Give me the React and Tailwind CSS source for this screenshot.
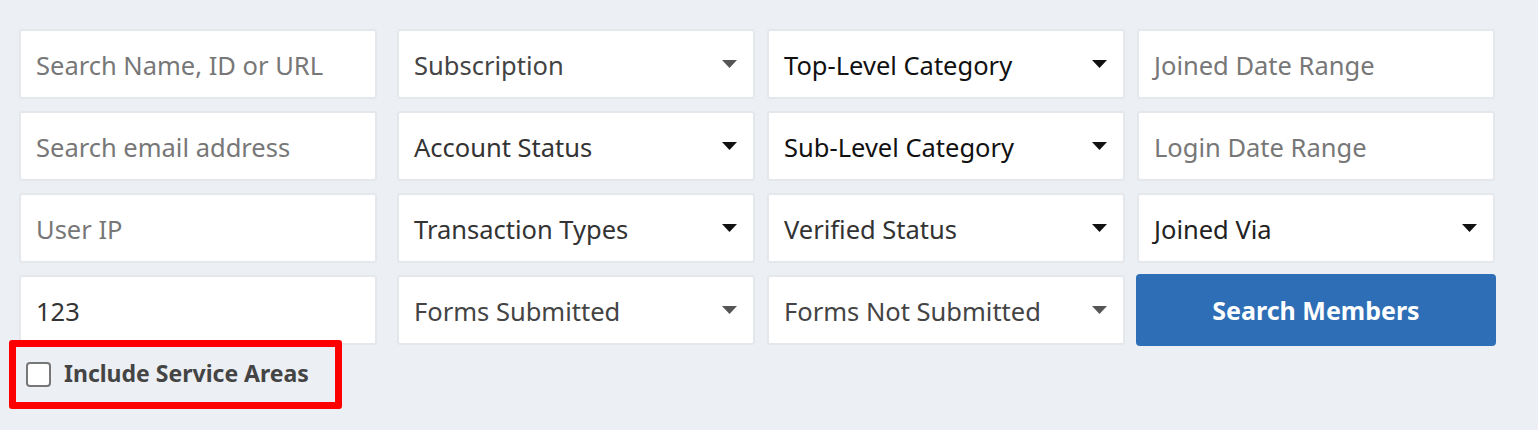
const Arrow = ({ dark }) => (
  <svg width="15" height="8" viewBox="0 0 15 8" className={dark ? "text-[#111]" : "text-[#555]"}>
    <path d="M0 0h15L7.5 8z" fill="currentColor" />
  </svg>
);

const Input = ({ placeholder, value, wide }) => (
  <div className={`h-[70px] ${wide ? "w-[358px]" : "w-full"} bg-white border-2 border-[#e4e7eb] rounded-[3px] flex items-center px-[15px] pt-[3px]`}>
    {value ? (
      <span className="text-[#333]">{value}</span>
    ) : (
      <span className="text-[#777]">{placeholder}</span>
    )}
  </div>
);

const Select = ({ label, dark, color = "text-[#333]" }) => (
  <div className="h-[70px] w-full bg-white border-2 border-[#e4e7eb] rounded-[3px] flex items-center justify-between pl-[15px] pr-[16px]">
    <span className={`${color} whitespace-nowrap pt-[3px]`}>{label}</span>
    <Arrow dark={dark} />
  </div>
);

export default function App() {
  return (
    <div className="min-h-[430px] bg-[#eceff4] pt-[29px] pl-[19px]" style={{ fontFamily: "'Noto Sans', sans-serif" }}>
      <div className="grid grid-cols-[366px_358px_358px_358px] gap-3 text-[25.5px] leading-none">
        <Input placeholder="Search Name, ID or URL" wide />
        <Select label="Subscription" color="text-[#444]" />
        <Select label="Top-Level Category" dark color="text-[#111]" />
        <Input placeholder="Joined Date Range" />

        <Input placeholder="Search email address" wide />
        <Select label="Account Status" dark />
        <Select label="Sub-Level Category" dark color="text-[#111]" />
        <Input placeholder="Login Date Range" />

        <Input placeholder="User IP" wide />
        <Select label="Transaction Types" dark />
        <Select label="Verified Status" dark />
        <Select label="Joined Via" dark color="text-[#222]" />

        <Input value="123" wide />
        <Select label="Forms Submitted" color="text-[#444]" />
        <Select label="Forms Not Submitted" color="text-[#444]" />
        <button className="h-[72px] w-[360px] -mt-px -ml-px bg-[#2d6eb6] rounded-[4px] text-white font-bold text-[25px]">
          Search Members
        </button>
      </div>
      <div className="relative z-10 -mt-[6px] -ml-[10px] w-[333px] h-[69px] border-[7px] border-[#ff0000] rounded-[3px] flex items-center pl-[10px] gap-[13px]">
        <span className="w-[25px] h-[25px] border-2 border-[#777] rounded-[4px] bg-white"></span>
        <span className="text-[23px] font-bold text-[#444] whitespace-nowrap -mt-[2px]">Include Service Areas</span>
      </div>
    </div>
  );
}
